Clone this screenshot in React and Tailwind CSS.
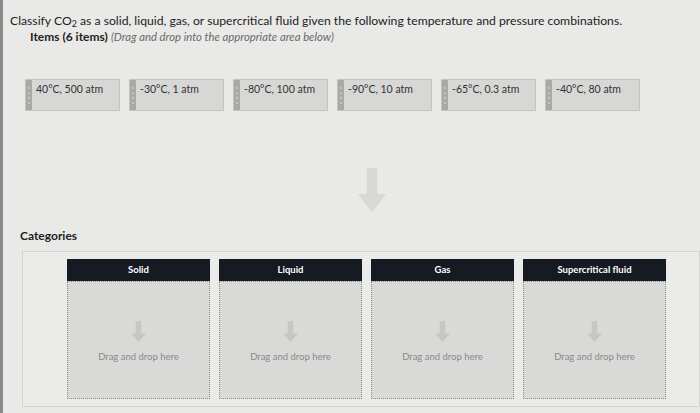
import React from 'react';

const items = [
  '40°C, 500 atm',
  '-30°C, 1 atm',
  '-80°C, 100 atm',
  '-90°C, 10 atm',
  '-65°C, 0.3 atm',
  '-40°C, 80 atm',
];

const categories = ['Solid', 'Liquid', 'Gas', 'Supercritical fluid'];

// Down arrow used as the drop hint
const DownArrow = ({ className }) => (
  <svg viewBox="0 0 32 44" className={className} preserveAspectRatio="none">
    <path d="M10 0h12v26h10L16 44 0 26h10z" fill="currentColor" />
  </svg>
);

const ItemTile = ({ label }) => (
  <div className="flex w-[95px] h-[32px] shrink-0 bg-[#d7d7d6] border border-[#c2c2c0]">
    {/* grip handle */}
    <div className="w-[6px] bg-[#a9a9a8] flex flex-col items-center justify-center gap-[3px]">
      <span className="w-[2px] h-[2px] bg-[#c4c4c4]" />
      <span className="w-[2px] h-[2px] bg-[#c4c4c4]" />
      <span className="w-[2px] h-[2px] bg-[#c4c4c4]" />
      <span className="w-[2px] h-[2px] bg-[#c4c4c4]" />
    </div>
    <span className="pl-[4px] pt-[3px] text-[10.5px] leading-[13px] text-[#333]">{label}</span>
  </div>
);

const CategoryColumn = ({ title }) => (
  <div className="w-[143px] shrink-0 flex flex-col">
    <div className="h-[22px] bg-[#161a23] flex items-center justify-center text-white text-[9.5px] font-bold">
      {title}
    </div>
    <div className="h-[118px] bg-[#d9d9d8] border border-dotted border-[#8e8e8e] flex flex-col items-center pt-[39px]">
      <DownArrow className="w-[15px] h-[21px] text-[#c6c6c5]" />
      <span className="mt-[8px] text-[9.5px] text-[#8a8a8a]">Drag and drop here</span>
    </div>
  </div>
);

export default function App() {
  return (
    <div
      className="w-[700px] h-[413px] overflow-hidden bg-[#e9e9e7] border-l-[3px] border-[#8b8b8b] text-[#222]"
      style={{ fontFamily: 'Lato, "Open Sans", sans-serif' }}
    >
      <div className="pl-[7px] pt-[12px] text-[12.2px] leading-[17px]">
        Classify CO<sub className="text-[9px]">2</sub> as a solid, liquid, gas, or supercritical fluid given the following temperature and pressure combinations.
      </div>
      <div className="pl-[27px] text-[12px] leading-[16px]">
        <span className="font-bold">Items (6 items)</span>{' '}
        <span className="italic text-[11.3px] text-[#6a6a6a]">(Drag and drop into the appropriate area below)</span>
      </div>

      <div className="flex gap-[9px] pl-[22px] mt-[34px]">
        {items.map((it) => (
          <ItemTile key={it} label={it} />
        ))}
      </div>

      <div className="flex justify-center pl-[40px] mt-[57px]">
        <DownArrow className="w-[28px] h-[44px] text-[#d8d8d7]" />
      </div>

      <div className="pl-[17px] mt-[16px] text-[12px] font-bold leading-[16px]">Categories</div>

      <div className="ml-[19px] mt-[7px] h-[156px] border border-[#d3d3d1] bg-[#ebebe9] pl-[44px] pt-[7px] flex gap-[9px]">
        {categories.map((c) => (
          <CategoryColumn key={c} title={c} />
        ))}
      </div>
    </div>
  );
}
